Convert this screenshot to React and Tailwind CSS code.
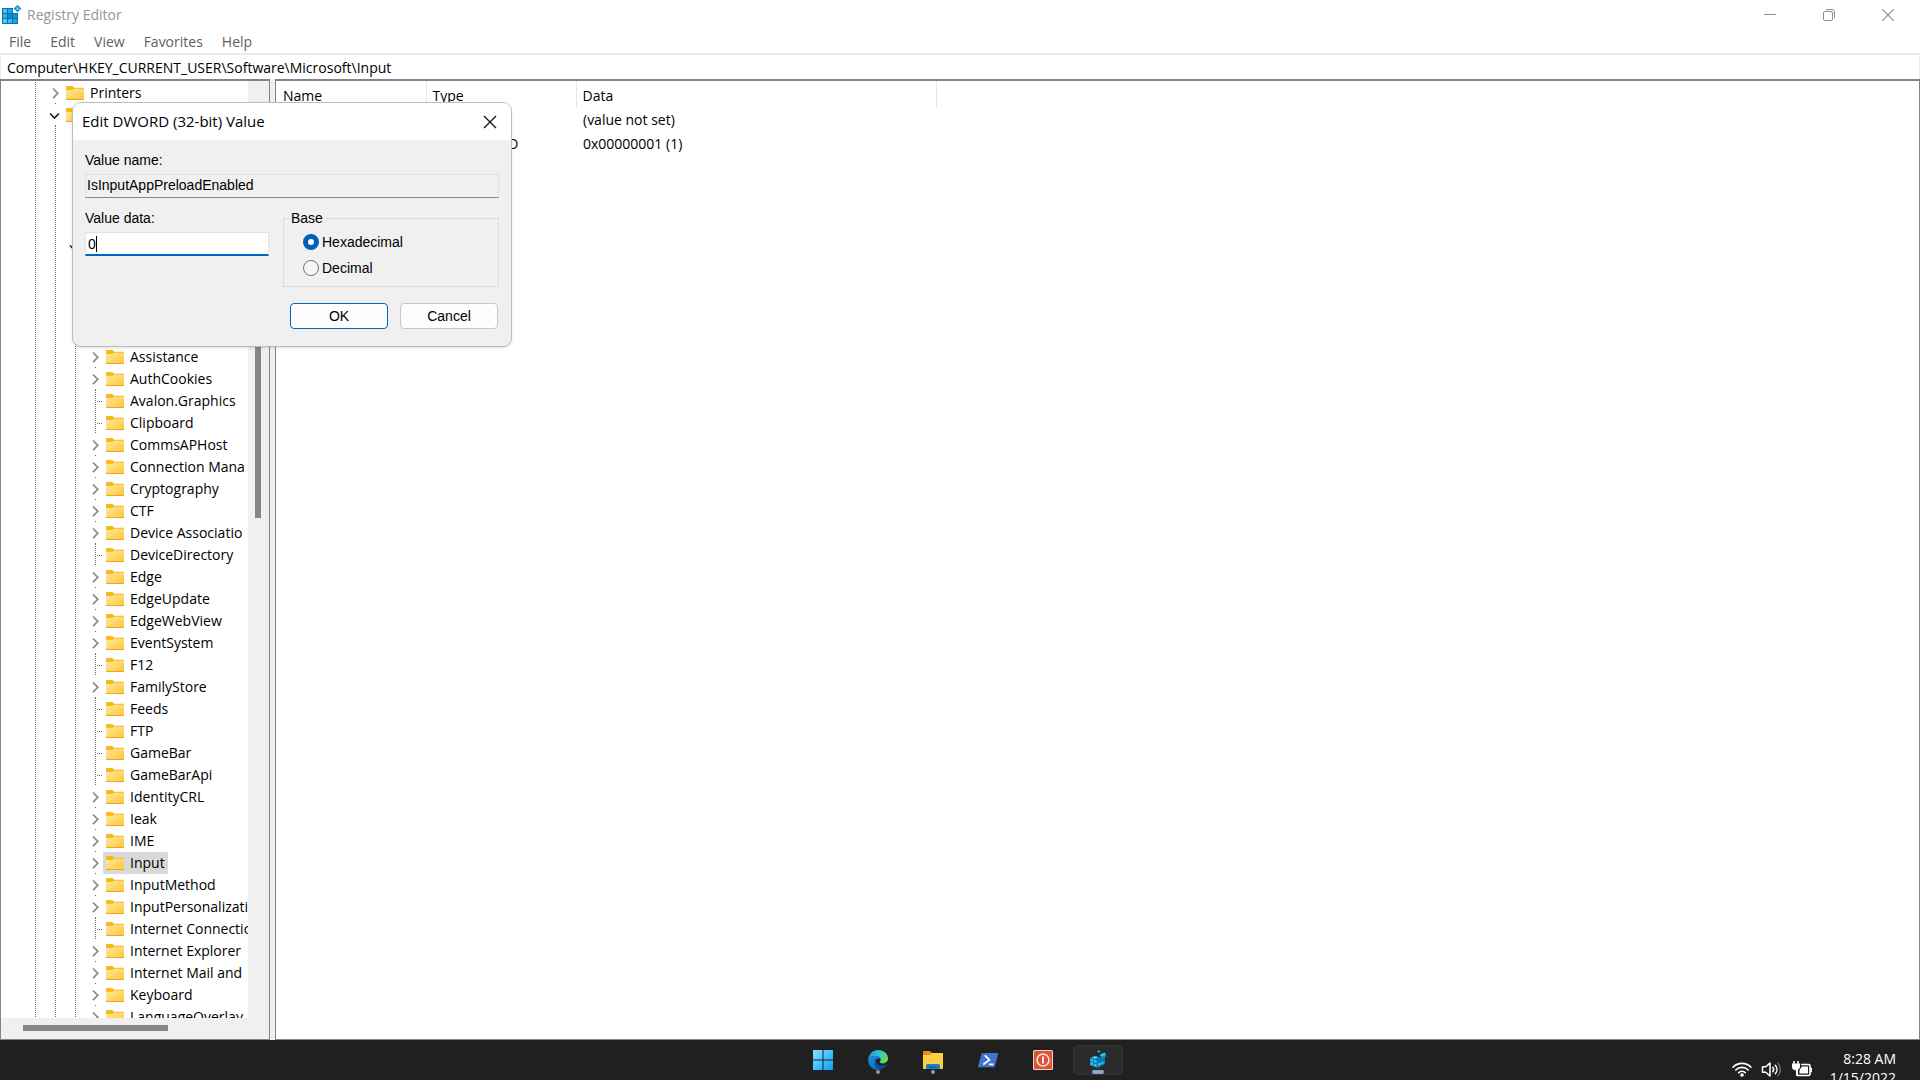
import React from "react";

const UI = "font-['Open_Sans','Noto_Sans',sans-serif]";

const TREE = [
  { name: "Printers", level: 1, state: "closed" },
  { name: "", level: 1, state: "open" },
  { level: 2 },
  { level: 2 },
  { level: 2 },
  { level: 2 },
  { level: 2 },
  { name: "", level: 2, state: "open" },
  { level: 3 },
  { level: 3 },
  { level: 3 },
  { level: 3 },
  { name: "Assistance", level: 3, state: "closed" },
  { name: "AuthCookies", level: 3, state: "closed" },
  { name: "Avalon.Graphics", level: 3, state: "leaf" },
  { name: "Clipboard", level: 3, state: "leaf" },
  { name: "CommsAPHost", level: 3, state: "closed" },
  { name: "Connection Mana", level: 3, state: "closed" },
  { name: "Cryptography", level: 3, state: "closed" },
  { name: "CTF", level: 3, state: "closed" },
  { name: "Device Associatio", level: 3, state: "closed" },
  { name: "DeviceDirectory", level: 3, state: "leaf" },
  { name: "Edge", level: 3, state: "closed" },
  { name: "EdgeUpdate", level: 3, state: "closed" },
  { name: "EdgeWebView", level: 3, state: "closed" },
  { name: "EventSystem", level: 3, state: "closed" },
  { name: "F12", level: 3, state: "leaf" },
  { name: "FamilyStore", level: 3, state: "closed" },
  { name: "Feeds", level: 3, state: "leaf" },
  { name: "FTP", level: 3, state: "leaf" },
  { name: "GameBar", level: 3, state: "leaf" },
  { name: "GameBarApi", level: 3, state: "leaf" },
  { name: "IdentityCRL", level: 3, state: "closed" },
  { name: "Ieak", level: 3, state: "closed" },
  { name: "IME", level: 3, state: "closed" },
  { name: "Input", level: 3, state: "closed", selected: true },
  { name: "InputMethod", level: 3, state: "closed" },
  { name: "InputPersonalizati", level: 3, state: "closed" },
  { name: "Internet Connectic", level: 3, state: "leaf" },
  { name: "Internet Explorer", level: 3, state: "closed" },
  { name: "Internet Mail and", level: 3, state: "closed" },
  { name: "Keyboard", level: 3, state: "closed" },
  { name: "LanguageOverlay", level: 3, state: "closed" },
];

function DotsDown() {
  return <span className="h-full w-px bg-[repeating-linear-gradient(to_bottom,#6d6d6d_0_1px,transparent_1px_2px)]" />;
}

function Guide() {
  return (
    <span className="flex h-full w-5 shrink-0 pl-2.5">
      <DotsDown />
    </span>
  );
}

function Toggle({ state, name }) {
  if (state === "leaf") {
    return (
      <span className="flex h-full w-[18px] shrink-0 items-center pl-2.5">
        <DotsDown />
        <span className="h-px flex-1 bg-[repeating-linear-gradient(to_right,transparent_0_1px,#6d6d6d_1px_2px)]" />
      </span>
    );
  }
  return (
    <button type="button" aria-label={"Toggle " + (name || "key")} className="h-full w-[18px] shrink-0">
      <svg width="18" height="22" viewBox="0 0 18 22" fill="none">
        {state === "open" ? (
          <path d="M5 9.500l4.500 4.500 4.500-4.500" stroke="#222" strokeWidth="1.700" />
        ) : (
          <path d="M8 6.500l4.800 4.800-4.800 4.800" stroke="#8a8a8a" strokeWidth="1.700" />
        )}
        <path d="M10 21h1v1h-1z" fill="#6d6d6d" />
      </svg>
    </button>
  );
}

function Folder() {
  return (
    <svg width="18" height="14" viewBox="0 0 18 14" className="shrink-0">
      <defs>
        <linearGradient id="folder" x1="0" y1="0" x2="1" y2="1">
          <stop offset="0" stopColor="#ffe9a0" />
          <stop offset="1" stopColor="#fec63a" />
        </linearGradient>
      </defs>
      <path d="M0 1a1 1 0 011-1h5.500l1.600 1.700H17a1 1 0 011 1V6H0z" fill="#f8b81e" />
      <path d="M0 4h6.500l1.500-1.200H18V13.500H0z" fill="url(#folder)" />
      <path d="M0 13h18v1H0z" fill="#eaa621" />
    </svg>
  );
}

function TreeRow({ item }) {
  const guides = Array.from({ length: item.level }, (_, i) => <Guide key={i} />);
  return (
    <li role="treeitem" aria-selected={!!item.selected} className="flex h-[22px] shrink-0 items-center">
      {guides}
      {item.state && (
        <>
          <Toggle state={item.state} name={item.name} />
          <span
            className={
              "flex h-[22px] shrink-0 items-center gap-1.5 rounded-xs px-[3px] whitespace-nowrap " +
              (item.selected ? "bg-[#d9d9d9]" : "")
            }
          >
            <Folder />
            {item.name}
          </span>
        </>
      )}
    </li>
  );
}

function RegIcon() {
  return (
    <svg width="20" height="20" viewBox="0 0 20 20">
      <path d="M0 3h11v5h5v11H0z" fill="#0a6fae" />
      {[[1, 4], [6, 4], [1, 9], [6, 9], [11, 9], [1, 14], [6, 14], [11, 14]].map(([x, y], i) => (
        <rect key={i} x={x} y={y} width="4" height="4" fill={["#3fc4f5", "#22a9e6", "#2bb4ee", "#0c8fd0", "#1293d4", "#4bd0fa", "#35bdf3", "#1da3e0"][i]} />
      ))}
      <path d="M15.500 0l3.800 3.600-3.800 3.700-3.800-3.700z" fill="#1688c4" />
      <path d="M15.500 1.800l1.900 1.800-1.900 1.900-1.900-1.900z" fill="#5ed3f8" />
    </svg>
  );
}

function WindowControls() {
  return (
    <div className="flex items-center gap-[47px] pr-[26px] text-[#8f8f8f]">
      <button type="button" aria-label="Minimize">
        <svg width="12" height="12" viewBox="0 0 12 12"><path d="M0 5.500h12" stroke="currentColor" /></svg>
      </button>
      <button type="button" aria-label="Restore">
        <svg width="12" height="12" viewBox="0 0 12 12" fill="none" stroke="currentColor">
          <rect x=".5" y="2.500" width="9" height="9" rx="1.500" />
          <path d="M3 .5h6a2.500 2.500 0 012.500 2.500v6" />
        </svg>
      </button>
      <button type="button" aria-label="Close">
        <svg width="12" height="12" viewBox="0 0 12 12"><path d="M0 0l12 12M12 0L0 12" stroke="currentColor" strokeWidth="1.200" /></svg>
      </button>
    </div>
  );
}

function EditDialog() {
  return (
    <form
      role="dialog"
      aria-label="Edit DWORD (32-bit) Value"
      className="absolute top-[102px] left-[72px] w-[440px] overflow-hidden rounded-[9px] border border-[#bdbdbd] bg-[#f0f0f0] pb-[17px] font-['Liberation_Sans',sans-serif] text-sm text-black shadow-sm"
    >
      <header className={"flex h-[37px] items-center justify-between bg-white pr-3.5 pl-[9px] text-[15px] " + UI}>
        <h2>Edit DWORD (32-bit) Value</h2>
        <button type="button" aria-label="Close dialog">
          <svg width="14" height="14" viewBox="0 0 14 14"><path d="M1 1l12 12M13 1L1 13" stroke="#111" strokeWidth="1.300" /></svg>
        </button>
      </header>
      <div className="px-3 pt-3">
        <label htmlFor="value-name" className="block h-[22px] leading-4">Value name:</label>
        <input
          id="value-name"
          readOnly
          defaultValue="IsInputAppPreloadEnabled"
          className="block h-6 w-full border border-[#e2e2e2] border-b-[#868686] bg-[#f0f0f0] px-px pb-0.5 outline-none"
        />
        <div className="mt-3 flex gap-3.5">
          <div className="w-[184px]">
            <label htmlFor="value-data" className="block h-[22px] leading-4">Value data:</label>
            <div className="flex h-6 items-center border border-b-2 border-[#e2e2e2] border-b-[#0067c0] bg-white px-0.5">
              <input
                id="value-data"
                defaultValue="0"
                className="w-2 bg-transparent outline-none"
              />
              <span className="h-4 border-l border-black" />
            </div>
          </div>
          <fieldset className="h-[77px] flex-1 border border-[#dcdcdc] pl-[19px]">
            <legend className="-ml-3.5 px-0.5 leading-4">Base</legend>
            <label className="mt-2 flex items-center gap-[3px] leading-4">
              <input
                type="radio"
                name="base"
                defaultChecked
                className="size-4 appearance-none rounded-full border border-[#767676] bg-[#f6f6f6] checked:border-5 checked:border-[#0060b9] checked:bg-white"
              />
              Hexadecimal
            </label>
            <label className="mt-2.5 flex items-center gap-[3px] leading-4">
              <input
                type="radio"
                name="base"
                className="size-4 appearance-none rounded-full border border-[#767676] bg-[#f6f6f6] checked:border-5 checked:border-[#0060b9] checked:bg-white"
              />
              Decimal
            </label>
          </fieldset>
        </div>
        <div className="mt-4 flex justify-end gap-3 pr-px">
          <button type="button" className="h-[26px] w-[98px] rounded-[4px] border border-[#0067c0] bg-[#fdfdfd]">OK</button>
          <button type="button" className="h-[26px] w-[98px] rounded-[4px] border border-[#c8c8c8] bg-[#fdfdfd]">Cancel</button>
        </div>
      </div>
    </form>
  );
}

function TaskButton({ label, dot, active, children }) {
  return (
    <button
      type="button"
      aria-label={label}
      className={
        "flex h-[30px] w-[50px] flex-col items-center rounded-[5px] border pt-1 " +
        (active ? "border-[#353535] bg-[#2b2b2b]" : "border-transparent")
      }
    >
      {children}
      {dot && <span className="size-1 shrink-0 rounded-full bg-[#9a9a9a]" />}
      {active && <span className="h-1 w-3 shrink-0 rounded-full bg-[#8fa3c4]" />}
    </button>
  );
}

function Taskbar() {
  return (
    <footer className="flex h-10 shrink-0 items-start overflow-hidden bg-[#202020] text-white">
      <div className="flex-1 pl-6" />
      <nav className="flex gap-[5px] pt-[5px]">
        <TaskButton label="Start">
          <svg width="20" height="20" viewBox="0 0 20 20">
            <defs>
              <linearGradient id="win" x1="0" y1="0" x2="1" y2="1">
                <stop offset="0" stopColor="#7fe3ff" />
                <stop offset="1" stopColor="#109cf5" />
              </linearGradient>
            </defs>
            <path d="M0 0h9.500v9.500H0zM10.500 0H20v9.500h-9.500zM0 10.500h9.500V20H0zM10.500 10.500H20V20h-9.500z" fill="url(#win)" />
          </svg>
        </TaskButton>
        <TaskButton label="Edge" dot>
          <svg width="20" height="20" viewBox="0 0 20 20" className="shrink-0">
            <defs>
              <linearGradient id="edgeTop" x1="0" y1="0.300" x2="1" y2="0.600">
                <stop offset="0" stopColor="#1c9be0" />
                <stop offset=".5" stopColor="#2fc4cf" />
                <stop offset="1" stopColor="#6ee04a" />
              </linearGradient>
              <linearGradient id="edgeLeft" x1="0" y1="0" x2="0.600" y2="1">
                <stop offset="0" stopColor="#1b8fdd" />
                <stop offset="1" stopColor="#1469c0" />
              </linearGradient>
            </defs>
            <path d="M.3 9C1 3.800 5 0 10 0c5.800 0 10 4 10 8.600 0 3-2.300 4.800-5 4.800-2.200 0-3.300-.8-3.300-1.500 0-.5.900-.9.900-2.300C12.600 7.200 10.300 6 7.600 6 4 6 1.400 7.600.3 9z" fill="url(#edgeTop)" />
            <path d="M.2 9.300C1.500 7 4.500 5.700 7.600 5.700c3 0 4.700 1.700 4.900 3.300C11.500 8 9.500 8 8.300 9.300c-2 2.200-1 7.200 4.200 8.300 1 .2-1 2.400-2.500 2.400C4 20-.4 15 .2 9.300z" fill="url(#edgeLeft)" />
            <path d="M8.300 9c-3.300 3.600-1.300 9.600 3.500 10.800 3-.5 5.600-2.200 7-4.700.2-.5-.2-.7-.6-.5-3.800 1.800-8.700.6-9.800-2.400-.5-1.300-.5-2.300-.1-3.200z" fill="#0f4a8c" />
          </svg>
        </TaskButton>
        <TaskButton label="File Explorer" dot>
          <svg width="20" height="20" viewBox="0 0 20 20" className="shrink-0">
            <path d="M0 2a1 1 0 011-1h6l2 2h10a1 1 0 011 1v3H0z" fill="#d9981a" />
            <path d="M0 5h7l2-2h11v15a1 1 0 01-1 1H1a1 1 0 01-1-1z" fill="#ffcf42" />
            <path d="M3 19v-3.500A1.500 1.500 0 014.500 14h11a1.500 1.500 0 011.500 1.500V19z" fill="#1583c9" />
            <path d="M6 16.500h8v1.200H6z" fill="#0c5a94" />
          </svg>
        </TaskButton>
        <TaskButton label="PowerShell">
          <svg width="20" height="20" viewBox="0 0 20 20">
            <path d="M4.500 3H19.400a.7.7 0 01.6.9L16.900 16.400a1 1 0 01-1 .8H.8a.7.700 0 01-.7-.9L3.500 3.800A1 1 0 014.500 3z" fill="#3f73cf" />
            <path d="M6.800 5.300l4.600 4.700-6.200 4.500M11 14.400h4.500" fill="none" stroke="#fff" strokeWidth="1.700" />
          </svg>
        </TaskButton>
        <TaskButton label="Power">
          <svg width="20" height="20" viewBox="0 0 20 20">
            <rect width="20" height="20" rx="1.500" fill="#f0d2ca" />
            <rect x="1" y="1" width="18" height="18" rx="1" fill="#de5235" />
            <circle cx="10" cy="10" r="6" fill="none" stroke="#fbe6df" strokeWidth="1.600" />
            <path d="M10 6.500v7" stroke="#fff" strokeWidth="1.800" />
          </svg>
        </TaskButton>
        <TaskButton label="Registry Editor" active>
          <svg width="20" height="20" viewBox="0 0 20 20" className="shrink-0">
            <path d="M2 8l5.500-2.500 5 2 4.500-1v7.500L10 18l-8-2.500z" fill="#0b78ad" />
            <path d="M2.500 8.500L5 9.500v2.300l-2.500-1zM6 9.800l2.600 1v2.300L6 12.100zM2.500 12l2.500 1v2.400l-2.500-1zM6 13.500l2.600 1v2.400L6 15.900zM10 13.200l2.300-.7v2.400l-2.300.8zM13.200 12.100l2.300-.7v2.300l-2.300.8zM9 1.500L11 .3l1.500 1.300-1.700 1z" fill="#38c4f2" />
            <path d="M11.500 4.500l5.500-2.200 1.500 4-5 1.700z" fill="#168fc4" />
            <path d="M12.500 4.800l4-1.500.6 1.500-4 1.600z" fill="#45cbf5" />
            <path d="M3.500 7.700L7 6.200l3 1.100-3.200 1.500z" fill="#5bd6f8" />
          </svg>
        </TaskButton>
      </nav>
      <div className="flex flex-1 items-start justify-end pr-6">
        <div className="flex items-center gap-2 pt-[19px]">
          <svg width="22" height="20" viewBox="0 0 22 20" fill="none" stroke="#fff" strokeWidth="1.600" strokeLinecap="round">
            <path d="M2 8.200a12.500 12.500 0 0118 0M4.800 11a8.700 8.700 0 0112.400 0M7.700 13.700a4.800 4.800 0 016.600 0" />
            <circle cx="11" cy="16" r="1.200" fill="#fff" stroke="none" />
            <circle cx="11" cy="16" r="1" />
          </svg>
          <svg width="22" height="20" viewBox="0 0 22 20" fill="none" stroke="#fff" strokeWidth="1.500" strokeLinejoin="round" strokeLinecap="round">
            <path d="M1.500 7.800h3.300L9 4v13l-4.200-3.800H1.500z" />
            <path d="M11.800 8.300a3.500 3.500 0 010 4.400M14.300 6.200a6.500 6.500 0 010 8.600" />
            <path d="M17 4.200a9.500 9.500 0 010 12.600" stroke="#666" />
          </svg>
          <svg width="22" height="20" viewBox="0 0 22 20" fill="none">
            <path d="M3 2v3M7 2v3" stroke="#fff" strokeWidth="1.600" />
            <path d="M1 4.500h8V8a3 3 0 01-2 2.600V17H5v-6a3 3 0 01-4-3z" fill="#fff" />
            <path d="M10 5.500h7.500a1.500 1.500 0 011.500 1.500v8a1.500 1.500 0 01-1.500 1.500H6" stroke="#fff" strokeWidth="1.700" />
            <path d="M11 7.500h6v7H8.500V11z" fill="#fff" />
            <path d="M19.500 8.800h1.500v4.400h-1.500z" fill="#fff" />
          </svg>
        </div>
        <div className="ml-[17px] pt-[9px] text-right leading-[19px]">
          <div>8:28 AM</div>
          <div>1/15/2022</div>
        </div>
      </div>
    </footer>
  );
}

export default function App() {
  return (
    <div className={"relative flex h-screen flex-col overflow-hidden bg-white text-sm text-black " + UI}>
      <header className="flex h-[29px] shrink-0 items-center justify-between pl-0.5">
        <h1 className="flex items-center gap-[5px] text-[#969696]">
          <RegIcon />
          Registry Editor
        </h1>
        <WindowControls />
      </header>
      <nav className="flex h-6 shrink-0 items-center gap-[19px] pt-px pl-[9px] text-[#606060]">
        {["File", "Edit", "View", "Favorites", "Help"].map((m) => (
          <button key={m} type="button">{m}</button>
        ))}
      </nav>
      <input
        aria-label="Address"
        defaultValue="Computer\HKEY_CURRENT_USER\Software\Microsoft\Input"
        className="h-[26px] w-full shrink-0 border border-t-2 border-b-0 border-[#ebebeb] px-1.5 outline-none"
      />
      <main className="flex min-h-0 flex-1 bg-[#f0f0f0]">
        <section className="flex w-[270px] shrink-0 flex-col border border-t-2 border-[#828290] bg-white">
          <div className="flex min-h-0 flex-1">
            <ul role="tree" className="flex min-w-0 flex-1 flex-col overflow-hidden pt-px pl-6">
              {TREE.map((item, i) => (
                <TreeRow key={i} item={item} />
              ))}
            </ul>
            <div className="flex w-[21px] shrink-0 bg-[#f0f0f0] pt-32 pl-[7px]">
              <div className="h-[309px] w-1.5 bg-[#868686]" />
            </div>
          </div>
          <div className="flex h-[21px] shrink-0 items-center bg-[#f0f0f0] pb-0.5 pl-[22px]">
            <div className="h-1.5 w-[145px] bg-[#868686]" />
          </div>
        </section>
        <section className="ml-[5px] min-w-0 flex-1 border border-t-2 border-[#828290] bg-white">
          <table className="table-fixed border-collapse text-left">
            <thead>
              <tr className="h-[27px]">
                <th className="w-[150px] border-r border-[#e5e5e5] pt-0.5 pl-[7px] font-normal">Name</th>
                <th className="w-[150px] border-r border-[#e5e5e5] pt-0.5 pl-1.5 font-normal">Type</th>
                <th className="w-[360px] border-r border-[#e5e5e5] pt-0.5 pl-1.5 font-normal">Data</th>
              </tr>
            </thead>
            <tbody>
              <tr className="h-6">
                <td />
                <td />
                <td className="pl-[7px]">(value not set)</td>
              </tr>
              <tr className="h-6">
                <td />
                <td className="pl-[7px]">REG_DWORD</td>
                <td className="pl-[7px]">0x00000001 (1)</td>
              </tr>
            </tbody>
          </table>
        </section>
      </main>
      <Taskbar />
      <EditDialog />
    </div>
  );
}
